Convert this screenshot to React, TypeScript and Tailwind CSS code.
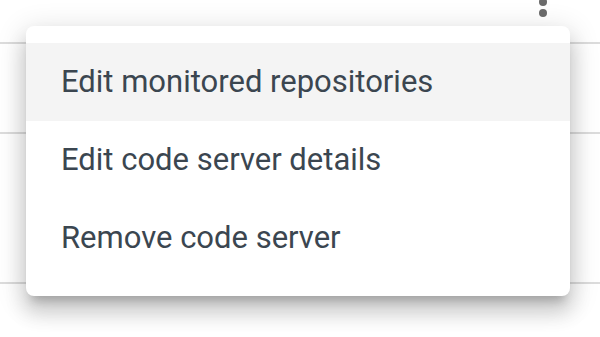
import React from 'react';

const menuItems = [
  { label: 'Edit monitored repositories', active: true },
  { label: 'Edit code server details', active: false },
  { label: 'Remove code server', active: false },
];

const App: React.FC = () => {
  return (
    <div
      className="relative h-[337px] w-[600px] overflow-hidden bg-white"
      style={{ fontFamily: 'Roboto, "Noto Sans", sans-serif' }}
    >
      {/* table rows behind the menu */}
      <div className="flex flex-col">
        <div className="flex h-[44px] justify-end border-b-2 border-[#dcdcdc] pr-[53px]">
          <div className="-mt-[13px] flex flex-col items-center gap-[3px]">
            <span className="h-[8px] w-[8px] rounded-full bg-[#6b6b6b]" />
            <span className="h-[8px] w-[8px] rounded-full bg-[#6b6b6b]" />
            <span className="h-[8px] w-[8px] rounded-full bg-[#6b6b6b]" />
          </div>
        </div>
        <div className="h-[90px] border-b-2 border-[#dcdcdc]" />
        <div className="h-[150px] border-b-2 border-[#dcdcdc]" />
      </div>

      {/* dropdown menu */}
      <div className="absolute left-[26px] top-[26px] w-[544px] rounded-[8px] bg-white pt-[17px] pb-[19px] shadow-[0_10px_10px_-6px_rgba(0,0,0,0.2),0_16px_20px_2px_rgba(0,0,0,0.14),0_6px_28px_4px_rgba(0,0,0,0.12)]">
        {menuItems.map((item) => (
          <div
            key={item.label}
            className={`flex h-[78px] items-center px-[35px] text-[31px] text-[#3b4650] ${
              item.active ? 'bg-[#f4f4f4]' : ''
            }`}
          >
            {item.label}
          </div>
        ))}
      </div>
    </div>
  );
};

export default App;
